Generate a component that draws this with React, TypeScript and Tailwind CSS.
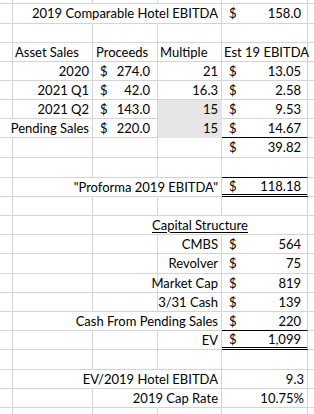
import type { ReactNode } from 'react';
import clsx from 'clsx';

// column widths (gridline is the right border of each cell)
const W = {
  a: 'w-[13px]',
  b: 'w-[80px]',
  c: 'w-[65px]',
  d: 'w-[64px]',
  e: 'w-[86px]',
};

type CellProps = {
  w: string;
  nr?: boolean; // gridline hidden (text spills over it)
  bottom?: 'grid' | 'black' | 'double' | 'fill';
  fill?: boolean;
  className?: string;
  children?: ReactNode;
};

function Cell({ w, nr, bottom = 'grid', fill, className, children }: CellProps) {
  return (
    <div
      className={clsx(
        'shrink-0 flex items-center whitespace-nowrap border-r',
        w,
        nr ? 'border-r-transparent' : fill ? 'border-r-[#e7e6e6]' : 'border-r-[#d4d4d4]',
        fill && 'bg-[#e7e6e6]',
        bottom === 'grid' && 'border-b border-b-[#d4d4d4]',
        bottom === 'fill' && 'border-b border-b-[#e7e6e6]',
        bottom === 'black' && 'border-b border-b-black',
        bottom === 'double' && 'border-b-[3px] border-double border-b-black',
        className
      )}
    >
      {children}
    </div>
  );
}

function Row({ h, children }: { h: string; children?: ReactNode }) {
  return <div className={clsx('flex', h)}>{children}</div>;
}

function Tail() {
  return <div className="flex-1 border-b border-b-[#d4d4d4]" />;
}

function Blank({ h }: { h: string }) {
  return (
    <Row h={h}>
      <Cell w={W.a} />
      <Cell w={W.b} />
      <Cell w={W.c} />
      <Cell w={W.d} />
      <Cell w={W.e} />
      <Tail />
    </Row>
  );
}

// accounting format: $ on the left, figure on the right
function Acct({ w, v, bottom, pr = 'pr-[7px]' }: { w: string; v: string; bottom?: CellProps['bottom']; pr?: string }) {
  return (
    <Cell w={w} bottom={bottom} className={clsx('justify-between pl-[7px]', pr)}>
      <span>$</span>
      <span>{v}</span>
    </Cell>
  );
}

function Label({ w, text, nr }: { w: string; text: string; nr?: boolean }) {
  return (
    <Cell w={w} nr={nr} className="justify-end pr-[3px]">
      {text}
    </Cell>
  );
}

const capRows = [
  { label: 'CMBS', v: '564', h: 'h-[19px]' },
  { label: 'Revolver', v: '75', h: 'h-[20px]' },
  { label: 'Market Cap', v: '819', h: 'h-[19px]' },
  { label: '3/31 Cash', v: '139', h: 'h-[19px]' },
];

export default function App() {
  return (
    <div className="w-[314px] h-[414px] overflow-hidden bg-white text-black text-[13px] leading-none font-['Lato',sans-serif]">
      <Blank h="h-[4px]" />

      <Row h="h-[20px]">
        <Cell w={W.a} />
        <Cell w={W.b} nr />
        <Cell w={W.c} nr />
        <Label w={W.d} text="2019 Comparable Hotel EBITDA" />
        <Acct w={W.e} v="158.0" pr="pr-[6px]" />
        <Tail />
      </Row>
      <Blank h="h-[19px]" />

      <Row h="h-[19px]">
        <Cell w={W.a} />
        <Cell w={W.b} className="pl-[2px]">Asset Sales</Cell>
        <Cell w={W.c} className="pl-[3px]">Proceeds</Cell>
        <Cell w={W.d} className="pl-[2px]">Multiple</Cell>
        <Cell w={W.e} className="pl-[2px]">Est 19 EBITDA</Cell>
        <Tail />
      </Row>

      <Row h="h-[19px]">
        <Cell w={W.a} />
        <Label w={W.b} text="2020" />
        <Acct w={W.c} v="274.0" />
        <Label w={W.d} text="21" />
        <Acct w={W.e} v="13.05" pr="pr-[6px]" />
        <Tail />
      </Row>
      <Row h="h-[19px]">
        <Cell w={W.a} />
        <Label w={W.b} text="2021 Q1" />
        <Acct w={W.c} v="42.0" />
        <Label w={W.d} text="16.3" />
        <Acct w={W.e} v="2.58" pr="pr-[6px]" />
        <Tail />
      </Row>
      <Row h="h-[19px]">
        <Cell w={W.a} />
        <Label w={W.b} text="2021 Q2" />
        <Acct w={W.c} v="143.0" />
        <Cell w={W.d} fill bottom="fill" className="justify-end pr-[3px]">15</Cell>
        <Acct w={W.e} v="9.53" pr="pr-[6px]" />
        <Tail />
      </Row>
      <Row h="h-[19px]">
        <Cell w={W.a} nr />
        <Label w={W.b} text="Pending Sales" />
        <Acct w={W.c} v="220.0" />
        <Cell w={W.d} fill bottom="fill" className="justify-end pr-[3px]">15</Cell>
        <Acct w={W.e} v="14.67" bottom="black" pr="pr-[6px]" />
        <Tail />
      </Row>
      <Row h="h-[20px]">
        <Cell w={W.a} />
        <Cell w={W.b} />
        <Cell w={W.c} />
        <Cell w={W.d} />
        <Acct w={W.e} v="39.82" pr="pr-[6px]" />
        <Tail />
      </Row>
      <Row h="h-[20px]">
        <Cell w={W.a} />
        <Cell w={W.b} />
        <Cell w={W.c} />
        <Cell w={W.d} />
        <Cell w={W.e} bottom="black" />
        <Tail />
      </Row>

      <Row h="h-[19px]">
        <Cell w={W.a} />
        <Cell w={W.b} nr />
        <Cell w={W.c} nr />
        <Label w={W.d} text={'"Proforma 2019 EBITDA"'} />
        <Acct w={W.e} v="118.18" bottom="double" pr="pr-[6px]" />
        <Tail />
      </Row>
      <Blank h="h-[19px]" />

      <Row h="h-[19px]">
        <Cell w={W.a} />
        <Cell w={W.b} />
        <Cell w="w-[215px]" className="justify-center">
          <span className="underline underline-offset-2 decoration-1">Capital Structure</span>
        </Cell>
        <Tail />
      </Row>

      {capRows.map((r) => (
        <Row key={r.label} h={r.h}>
          <Cell w={W.a} />
          <Cell w={W.b} />
          <Cell w={W.c} />
          <Label w={W.d} text={r.label} />
          <Acct w={W.e} v={r.v} pr="pr-[6px]" />
          <Tail />
        </Row>
      ))}

      <Row h="h-[19px]">
        <Cell w={W.a} />
        <Cell w={W.b} nr />
        <Cell w={W.c} nr />
        <Label w={W.d} text="Cash From Pending Sales" />
        <Acct w={W.e} v="220" bottom="black" pr="pr-[6px]" />
        <Tail />
      </Row>
      <Row h="h-[19px]">
        <Cell w={W.a} />
        <Cell w={W.b} />
        <Cell w={W.c} />
        <Label w={W.d} text="EV" />
        <Acct w={W.e} v="1,099" bottom="double" pr="pr-[6px]" />
        <Tail />
      </Row>
      <Blank h="h-[20px]" />

      <Row h="h-[19px]">
        <Cell w={W.a} />
        <Cell w={W.b} nr />
        <Cell w={W.c} nr />
        <Label w={W.d} text="EV/2019 Hotel EBITDA" />
        <Cell w={W.e} className="justify-end pr-[3px]">9.3</Cell>
        <Tail />
      </Row>
      <Row h="h-[19px]">
        <Cell w={W.a} />
        <Cell w={W.b} />
        <Cell w={W.c} nr />
        <Label w={W.d} text="2019 Cap Rate" />
        <Cell w={W.e} className="justify-end pr-[3px]">10.75%</Cell>
        <Tail />
      </Row>
      <Blank h="h-[10px]" />
    </div>
  );
}
